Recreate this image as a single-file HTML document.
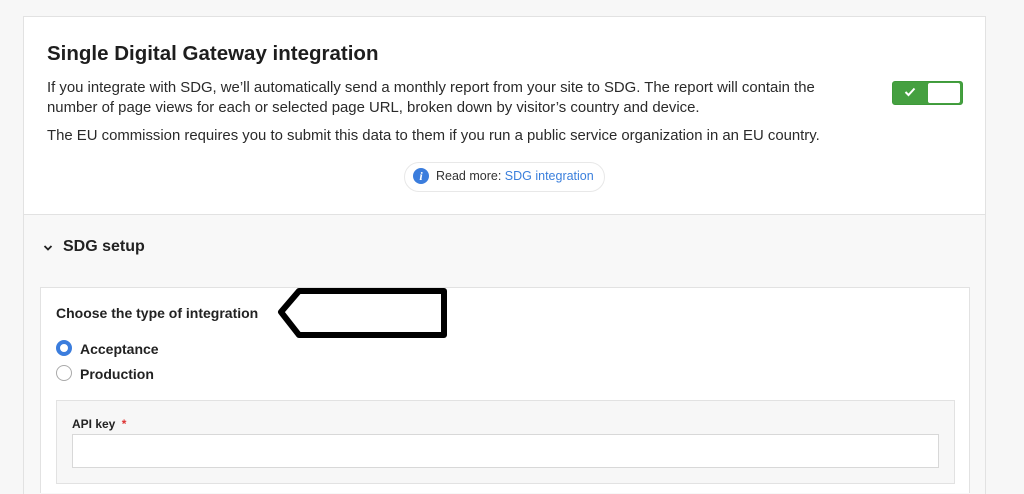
<!DOCTYPE html>
<html style="overflow:hidden;height:494px"><head><style>
body{margin:0;width:1024px;height:494px;background:#f7f7f7;font-family:"Liberation Sans",sans-serif;color:#222;position:relative;overflow:hidden}
.card{position:absolute;left:23px;top:16px;width:961px;height:478px;border:1px solid #e2e2e2;border-bottom:none;background:#f8f8f8;overflow:hidden}
.top{position:absolute;left:0;top:0;width:961px;height:197px;background:#fff;border-bottom:1px solid #e2e2e2}
.t{position:absolute;white-space:nowrap}
</style></head><body>
<div class="card">
<div class="top">
<div class="t" style="left:23px;top:25px;font-size:20.5px;font-weight:bold;color:#1e1e1e">Single Digital Gateway integration</div>
<div class="t" style="left:23px;top:61px;font-size:14.9px;line-height:20px;color:#2a2a2a">If you integrate with SDG, we’ll automatically send a monthly report from your site to SDG. The report will contain the<br>number of page views for each or selected page URL, broken down by visitor’s country and device.</div>
<div class="t" style="left:23px;top:109px;font-size:14.9px;line-height:20px;color:#2a2a2a">The EU commission requires you to submit this data to them if you run a public service organization in an EU country.</div>
<div style="position:absolute;left:380px;top:145px;width:199px;height:28px;border:1px solid #e8e8e8;border-radius:15px;background:#fff"></div>
<div style="position:absolute;left:389px;top:151px;width:16px;height:16px;border-radius:50%;background:#3b7ddd;color:#fff;font-size:12px;font-weight:bold;font-style:italic;text-align:center;line-height:16px;font-family:'Liberation Serif',serif">i</div>
<div class="t" style="left:412px;top:152px;font-size:12.5px;color:#333">Read more: <span style="color:#3a7fdc">SDG integration</span></div>
<div style="position:absolute;left:868px;top:64px;width:69px;height:22px;border:1px solid #3e9a3a;border-radius:3px;background:#45a040"></div>
<div style="position:absolute;left:904px;top:66px;width:32px;height:20px;background:#fff;border-radius:2px"></div>
<svg style="position:absolute;left:880px;top:70px" width="12" height="10"><path d="M1.5 5 L4.5 8 L10.5 1.5" stroke="#fff" stroke-width="2" fill="none"/></svg>
</div>
<svg style="position:absolute;left:19px;top:227px" width="10" height="8"><path d="M1.5 2 L5 5.5 L8.5 2" stroke="#222" stroke-width="1.8" fill="none"/></svg>
<div class="t" style="left:39px;top:221px;font-size:16px;font-weight:bold;color:#222">SDG setup</div>
<div style="position:absolute;left:16px;top:270px;width:928px;height:205px;background:#fff;border:1px solid #e2e2e2;border-bottom:none">
<div class="t" style="left:15px;top:17px;font-size:14px;font-weight:bold;color:#222">Choose the type of integration</div>
<div style="position:absolute;left:15px;top:52px;width:8px;height:8px;border-radius:50%;border:4px solid #3b7ddd;background:#fff"></div>
<div class="t" style="left:39px;top:53px;font-size:14px;font-weight:bold;color:#222">Acceptance</div>
<div style="position:absolute;left:15px;top:77px;width:14px;height:14px;border-radius:50%;border:1px solid #aaa;background:#fff"></div>
<div class="t" style="left:39px;top:78px;font-size:14px;font-weight:bold;color:#222">Production</div>
<div style="position:absolute;left:15px;top:112px;width:897px;height:82px;background:#f7f7f7;border:1px solid #e2e2e2">
<div class="t" style="left:15px;top:16px;font-size:12px;font-weight:bold;color:#222">API key <span style="color:#d33;margin-left:3px">*</span></div>
<div style="position:absolute;left:15px;top:33px;width:865px;height:32px;background:#fff;border:1px solid #d8d8d8"></div>
</div>
</div>
</div>
<svg style="position:absolute;left:0;top:0" width="1024" height="494"><path d="M281 312 L299 291 L444 291 L444 335 L299 335 Z" stroke="#000" stroke-width="6" stroke-linejoin="round" fill="#fff"/></svg>
</body></html>
